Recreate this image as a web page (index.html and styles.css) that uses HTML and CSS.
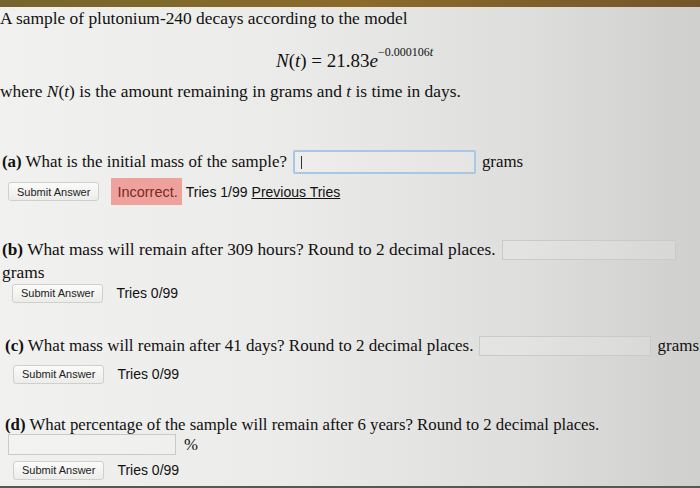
FILE: index.html
```html
<!DOCTYPE html>
<html>
<head>
<meta charset="utf-8">
<link rel="stylesheet" href="styles.css">
</head>
<body>
<div class="topbar"></div>
<div class="page">
  <p class="line intro">A sample of plutonium-240 decays according to the model</p>
  <p class="line formula"><i>N</i>(<i>t</i>) = 21.83<i>e</i><sup>−0.000106<i>t</i></sup></p>
  <p class="line where">where <i>N</i>(<i>t</i>) is the amount remaining in grams and <i>t</i> is time in days.</p>

  <div class="q qa">
    <div class="qrow"><span><b>(a)</b> What is the initial mass of the sample?</span><span class="input focused"><span class="caret"></span></span><span>grams</span></div>
    <div class="actions act-a"><span class="btn">Submit Answer</span><span class="incorrect">Incorrect.</span><span class="tries">Tries 1/99</span><span class="prev">Previous Tries</span></div>
  </div>

  <div class="q qb">
    <div class="qrow"><span><b>(b)</b> What mass will remain after 309 hours? Round to 2 decimal places.</span><span class="input wb"></span></div>
    <div class="unit">grams</div>
    <div class="actions act-b"><span class="btn">Submit Answer</span><span class="tries">Tries 0/99</span></div>
  </div>

  <div class="q qc">
    <div class="qrow"><span><b>(c)</b> What mass will remain after 41 days? Round to 2 decimal places.</span><span class="input wc"></span><span>grams</span></div>
    <div class="actions act-c"><span class="btn">Submit Answer</span><span class="tries">Tries 0/99</span></div>
  </div>

  <div class="q qd">
    <div class="qrow"><span><b>(d)</b> What percentage of the sample will remain after 6 years? Round to 2 decimal places.</span></div>
    <div class="qrow pct"><span class="input wd"></span><span class="pctsign">%</span></div>
    <div class="actions act-d"><span class="btn">Submit Answer</span><span class="tries">Tries 0/99</span></div>
  </div>
</div>
<div class="bottombar"></div>
</body>
</html>
```
FILE: styles.css
```css
html, body {
  margin: 0;
  padding: 0;
}
body {
  width: 700px;
  height: 488px;
  overflow: hidden;
  background: linear-gradient(90deg, #f1f1ef 0%, #ebebe9 40%, #dededc 75%, #cfd0ce 100%);
  font-family: "Liberation Serif", "Times New Roman", serif;
  font-size: 17.4px;
  color: #111;
  display: flex;
  flex-direction: column;
}
.topbar {
  height: 7px;
  background: linear-gradient(90deg, #76652c, #8c6b2a 50%, #74562a);
  flex: none;
}
.page {
  flex: 1;
  display: flex;
  flex-direction: column;
}
.bottombar {
  height: 2px;
  background: #5a5650;
  flex: none;
}
.line {
  margin: 0;
  line-height: 22px;
  height: 22px;
}
.intro { margin-top: 0; }
.formula {
  margin-top: 16px;
  padding-left: 276px;
  font-size: 19px;
}
.formula sup {
  font-size: 12px;
  position: relative;
  top: -4px;
}
.where { margin-top: 13px; }
.q { display: flex; flex-direction: column; }
.qrow {
  display: flex;
  align-items: center;
  gap: 6px;
  height: 22px;
  line-height: 22px;
  white-space: nowrap;
}
.input {
  display: inline-block;
  height: 18px;
  border: 1px solid #c9cbc9;
  background: rgba(255,255,255,0.15);
  box-sizing: content-box;
}
.input.focused {
  width: 179px;
  height: 20px;
  border: 2px solid #a9c6e4;
  border-radius: 2px;
  position: relative;
}
.caret {
  position: absolute;
  left: 6px;
  top: 4px;
  width: 1px;
  height: 13px;
  background: #333;
}
.qa { margin-top: 48px; padding-left: 2px; }
.qa .qrow { height: 24px; font-size: 16.9px; }
.qb .qrow { font-size: 17.3px; }
.qc .qrow { font-size: 17px; }
.qd .qrow { font-size: 16.8px; }
.wb { width: 172px; }
.wc { width: 170px; }
.wd { width: 166px; height: 19px; }
.actions {
  display: flex;
  align-items: center;
  font-family: "Liberation Sans", Arial, sans-serif;
  font-size: 14px;
  color: #111;
  white-space: nowrap;
}
.btn {
  display: inline-flex;
  align-items: center;
  justify-content: center;
  height: 17px;
  padding: 0 8px;
  border: 1px solid #cfcfcd;
  border-radius: 3px;
  background: linear-gradient(#fbfbfa, #ecece9);
  font-size: 11px;
  color: #222;
}
.incorrect {
  display: inline-flex;
  align-items: center;
  height: 27px;
  padding: 0 4px 0 6px;
  margin-left: 12px;
  background: #efa29c;
  color: #7a2a25;
  font-size: 14.5px;
}
.tries { margin-left: 4px; }
.prev { margin-left: 4px; text-decoration: underline; }
.act-a { margin-top: 4px; padding-left: 6px; }
.act-b .tries, .act-c .tries, .act-d .tries { margin-left: 13px; }
.qb { margin-top: 34px; padding-left: 2px; }
.unit { height: 22px; line-height: 22px; }
.act-b { margin-top: 0; padding-left: 10px; height: 20px; }
.qc { margin-top: 32px; padding-left: 5px; }
.act-c { margin-top: 7px; padding-left: 8px; height: 20px; }
.qd { margin-top: 30px; padding-left: 5px; }
.pct { height: 21px; margin-top: -2px; gap: 8px; padding-left: 3px; }
.pctsign { line-height: 18px; }
.act-d { margin-top: 5px; padding-left: 8px; height: 20px; }
```
